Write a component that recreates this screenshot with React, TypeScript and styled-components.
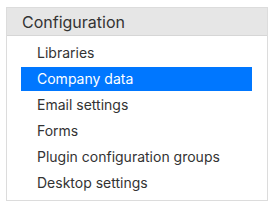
import React from "react";
import styled, { createGlobalStyle } from "styled-components";

const Global = createGlobalStyle`
  html, body { margin: 0; padding: 0; background: #fff; }
  body { font-family: Inter, Roboto, "Liberation Sans", sans-serif; }
`;

const Page = styled.div`
  padding: 7px 0 0 6px;
`;

const Panel = styled.div`
  width: 260px;
  border: 1px solid #dcdcdc;
  background: #fff;
`;

const Header = styled.div`
  height: 27px;
  padding-left: 15px;
  background: #e6e6e6;
  border-bottom: 1px solid #d6d6d6;
  display: flex;
  align-items: center;
  font-size: 16px;
  color: #333;
`;

const List = styled.ul`
  list-style: none;
  margin: 0;
  padding: 5px 15px 5px 14px;
  display: flex;
  flex-direction: column;
  gap: 2px;
`;

const Item = styled.li<{ $active?: boolean }>`
  height: 24px;
  box-sizing: border-box;
  padding: 0 0 2px 16px;
  display: flex;
  align-items: center;
  font-size: 14px;
  color: ${(p) => (p.$active ? "#fff" : "#333")};
  background: ${(p) => (p.$active ? "#0077ff" : "transparent")};
`;

const items = [
  "Libraries",
  "Company data",
  "Email settings",
  "Forms",
  "Plugin configuration groups",
  "Desktop settings",
];

export default function App() {
  return (
    <Page>
      <Global />
      <Panel>
        <Header>Configuration</Header>
        <List>
          {items.map((t) => (
            <Item key={t} $active={t === "Company data"}>
              {t}
            </Item>
          ))}
        </List>
      </Panel>
    </Page>
  );
}
